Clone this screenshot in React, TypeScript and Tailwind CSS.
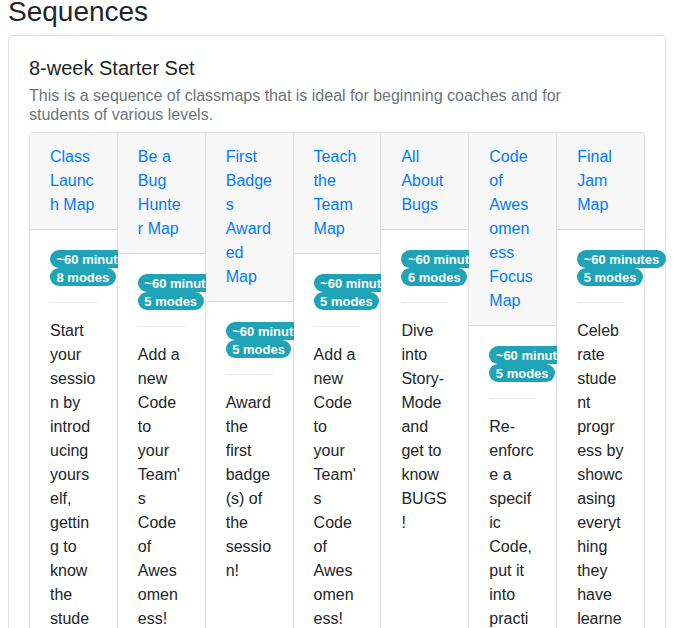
import React from "react";

type Seq = {
  title: string[];
  badges: string[];
  body: string[];
};

const seqs: Seq[] = [
  {
    title: ["Class", "Launc", "h Map"],
    badges: ["~60 minutes", "8 modes"],
    body: ["Start", "your", "sessio", "n by", "introd", "ucing", "yours", "elf,", "gettin", "g to", "know", "the", "stude", "nts", "and", "their", "names!"],
  },
  {
    title: ["Be a", "Bug", "Hunte", "r Map"],
    badges: ["~60 minutes", "5 modes"],
    body: ["Add a", "new", "Code", "to", "your", "Team'", "s", "Code", "of", "Awes", "omen", "ess!"],
  },
  {
    title: ["First", "Badge", "s", "Award", "ed", "Map"],
    badges: ["~60 minutes", "5 modes"],
    body: ["Award", "the", "first", "badge", "(s) of", "the", "sessio", "n!"],
  },
  {
    title: ["Teach", "the", "Team", "Map"],
    badges: ["~60 minutes", "5 modes"],
    body: ["Add a", "new", "Code", "to", "your", "Team'", "s", "Code", "of", "Awes", "omen", "ess!"],
  },
  {
    title: ["All", "About", "Bugs"],
    badges: ["~60 minutes", "6 modes"],
    body: ["Dive", "into", "Story-", "Mode", "and", "get to", "know", "BUGS", "!"],
  },
  {
    title: ["Code", "of", "Awes", "omen", "ess", "Focus", "Map"],
    badges: ["~60 minutes", "5 modes"],
    body: ["Re-", "enforc", "e a", "specif", "ic", "Code,", "put it", "into", "practi", "ce!"],
  },
  {
    title: ["Final", "Jam", "Map"],
    badges: ["~60 minutes", "5 modes"],
    body: ["Celeb", "rate", "stude", "nt", "progr", "ess by", "showc", "asing", "everyt", "hing", "they", "have", "learne", "d!"],
  },
];

function SeqCard({ s, index, count }: { s: Seq; index: number; count: number }) {
  const first = index === 0;
  const last = index === count - 1;
  const cardCls = [
    "flex flex-col min-w-0 flex-1 bg-white border-y border-r border-[#dfdfdf]",
    first ? "border-l rounded-l-[4px]" : "border-l-0",
    last ? "rounded-r-[4px]" : "",
  ].join(" ");
  const headCls = [
    "bg-[#f7f7f7] px-5 py-3 border-b border-[#dfdfdf]",
    first ? "rounded-tl-[3px]" : "",
    last ? "rounded-tr-[3px]" : "",
  ].join(" ");
  return (
    <div className={cardCls}>
      <div className={headCls}>
        <a href="#" className="block text-[16px] leading-6 text-[#007bff]">
          {s.title.map((t, i) => (
            <span key={i} className="block whitespace-nowrap">
              {t}
            </span>
          ))}
        </a>
      </div>
      <div className="flex-1 p-5">
        <div className="flex flex-col items-start">
          {s.badges.map((b, i) => (
            <span
              key={i}
              className="inline-block whitespace-nowrap rounded-full bg-[#1fa3b6] px-[6.5px] py-[2.5px] text-[13px] font-bold leading-[13px] text-white"
            >
              {b}
            </span>
          ))}
        </div>
        <hr className="my-4 border-0 border-t border-t-[#e6e6e6]" />
        <p className="text-[16px] leading-6 text-[#212529]">
          {s.body.map((t, i) => (
            <span key={i} className="block whitespace-nowrap">
              {t}
            </span>
          ))}
        </p>
      </div>
    </div>
  );
}

export default function App() {
  return (
    <div className="min-h-screen bg-white pl-[8px] font-['Liberation_Sans',Arial,sans-serif] text-[#212529]">
      <h3 className="mt-[-2px] mb-[9px] text-[28px] font-medium leading-[28px] text-[#212529]">
        Sequences
      </h3>
      <div className="w-[658px] rounded-[4px] border border-[#dfdfdf] bg-white">
        <div className="p-5">
          <h5 className="mb-3 text-[20px] font-medium leading-6 text-[#212529]">
            8-week Starter Set
          </h5>
          <h6 className="mt-[-6px] text-[16px] font-medium leading-[19.2px] text-[#6c757d]">
            This is a sequence of classmaps that is ideal for beginning coaches and for
            <br />
            students of various levels.
          </h6>
          <div className="mt-2 flex">
            {seqs.map((s, i) => (
              <SeqCard key={i} s={s} index={i} count={seqs.length} />
            ))}
          </div>
        </div>
      </div>
    </div>
  );
}
